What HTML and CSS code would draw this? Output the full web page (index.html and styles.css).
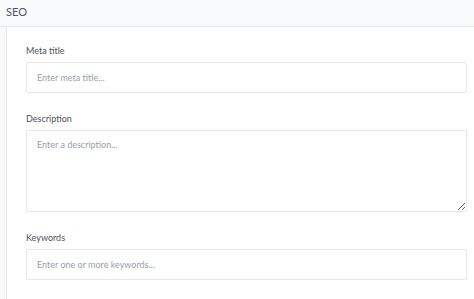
FILE: index.html
```html
<!DOCTYPE html>
<html lang="en">
  <head>
    <meta charset="UTF-8" />
    <meta name="viewport" content="width=device-width, initial-scale=1.0" />
    <title>SEO</title>
    <link rel="stylesheet" href="styles.css">
  </head>
  <body>
    <div class="panel-header">SEO</div>

    <div class="panel-body">
      <div class="field">
        <label class="field-label" for="meta-title">Meta title</label>
        <input class="field-input" id="meta-title" type="text" placeholder="Enter meta title..." />
      </div>

      <div class="field">
        <label class="field-label" for="description">Description</label>
        <textarea class="field-input field-textarea" id="description" placeholder="Enter a description..."></textarea>
      </div>

      <div class="field">
        <label class="field-label" for="keywords">Keywords</label>
        <input class="field-input" id="keywords" type="text" placeholder="Enter one or more keywords..." />
      </div>
    </div>
  </body>
</html>
```

FILE: styles.css
```css
body {
  font-family: "Source Sans Pro", "Lato", "Noto Sans", sans-serif;
  margin: 0;
  background-color: #f8f9fb;
  color: #4a4f55;
  overflow: hidden;
}
.panel-header {
  height: 26px;
  line-height: 24px;
  padding: 0 6px;
  font-size: 11px;
  color: #50565c;
  border-bottom: 1px solid #e8eaed;
}
.panel-body {
  background-color: white;
  margin-left: 6px;
  margin-right: -12px;
  border-left: 1px solid #e8eaed;
  padding: 17px 19px 0 19px;
  height: 272px;
  box-sizing: border-box;
}
.field {
  display: flex;
  flex-direction: column;
  margin-bottom: 19px;
}
.field-label {
  font-size: 9px;
  line-height: 14px;
  color: #4d5257;
  margin-bottom: 4px;
}
.field-input {
  font-family: inherit;
  font-size: 9px;
  color: #4a4f55;
  height: 31px;
  box-sizing: border-box;
  padding: 0 10px;
  border: 1px solid #e5e7ea;
  border-radius: 2px;
  background-color: white;
  outline: none;
}
.field-input::placeholder {
  color: #98a0a9;
}
.field-textarea {
  height: 82px;
  padding: 8px 10px;
  resize: vertical;
}
```
